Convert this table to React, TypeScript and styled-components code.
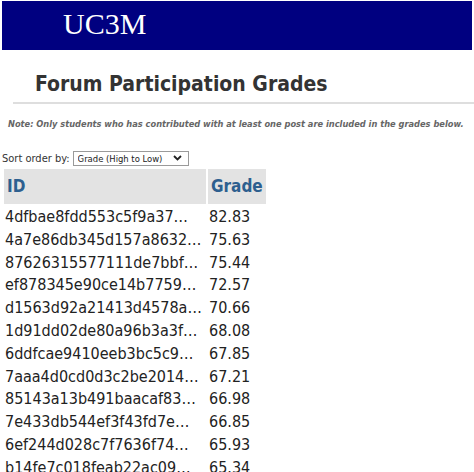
import React from "react";
import styled, { createGlobalStyle } from "styled-components";

const FONT = `"DejaVu Sans Condensed", "DejaVu Sans", sans-serif`;

const GlobalStyle = createGlobalStyle`
  html, body { margin: 0; padding: 0; background: #ffffff; }
  body { font-family: ${FONT}; font-stretch: condensed; color: #222; }
`;

const Page = styled.div`
  padding: 1px 2px 0 2px;
`;

const Banner = styled.header`
  height: 49px;
  background: #000080;
  display: flex;
  align-items: center;
  padding-left: 61px;
  box-sizing: border-box;
`;

const Logo = styled.div`
  font-family: "Liberation Serif", "Times New Roman", serif;
  font-size: 30px;
  color: #ffffff;
  line-height: 1;
  margin-top: -3px;
`;

const TitleBlock = styled.div`
  margin: 22px -2px 0 11px;
  padding: 0 0 6px 22px;
  border-bottom: 2px solid #dedede;
`;

const Title = styled.h1`
  margin: 0;
  font-size: 21px;
  line-height: 24px;
  font-weight: bold;
  color: #333333;
`;

const Note = styled.p`
  margin: 14px 0 0 6px;
  font-size: 9.2px;
  line-height: 12px;
  font-style: italic;
  font-weight: bold;
  color: #666666;
  white-space: nowrap;
`;

const SortRow = styled.div`
  display: flex;
  align-items: center;
  gap: 3px;
  margin-top: 21px;
  font-size: 11px;
  color: #333;
`;

const SelectWrap = styled.span`
  position: relative;
  display: inline-flex;
`;

const Select = styled.select`
  appearance: none;
  -webkit-appearance: none;
  box-sizing: border-box;
  width: 116px;
  height: 15px;
  border: 1px solid #9a9a9a;
  border-radius: 0;
  background: #fff;
  font-family: ${FONT};
  font-stretch: condensed;
  font-size: 9.4px;
  color: #222;
  padding: 0 0 0 4px;
  line-height: 13px;
  margin: 0;
`;

const Chevron = styled.svg`
  position: absolute;
  right: 7px;
  top: 4px;
  pointer-events: none;
`;

const Table = styled.table`
  border-spacing: 2px;
  margin-top: 1px;
  margin-left: 0;
`;

const HeadCell = styled.th<{ $w: number }>`
  width: ${(p) => p.$w}px;
  box-sizing: border-box;
  background: #e3e3e3;
  color: #2d5f8f;
  font-size: 17px;
  font-weight: bold;
  text-align: left;
  padding: 6px 3px;
  line-height: 23px;
`;

const Cell = styled.td<{ $w: number }>`
  max-width: ${(p) => p.$w}px;
  width: ${(p) => p.$w}px;
  box-sizing: border-box;
  padding: 2px 1px 0 1px;
  font-size: 16px;
  line-height: 18.8px;
  color: #222;
  white-space: nowrap;
  overflow: hidden;
  text-overflow: ellipsis;
`;

const rows: [string, string][] = [
  ["4dfbae8fdd553c5f9a37\u2026", "82.83"],
  ["4a7e86db345d157a8632\u2026", "75.63"],
  ["87626315577111de7bbf\u2026", "75.44"],
  ["ef878345e90ce14b7759\u2026", "72.57"],
  ["d1563d92a21413d4578a\u2026", "70.66"],
  ["1d91dd02de80a96b3a3f\u2026", "68.08"],
  ["6ddfcae9410eeb3bc5c9\u2026", "67.85"],
  ["7aaa4d0cd0d3c2be2014\u2026", "67.21"],
  ["85143a13b491baacaf83\u2026", "66.98"],
  ["7e433db544ef3f43fd7e\u2026", "66.85"],
  ["6ef244d028c7f7636f74\u2026", "65.93"],
  ["b14fe7c018feab22ac09\u2026", "65.34"],
  ["a0c3e1d7f2b9845e6a1c\u2026", "64.90"],
];

export default function App() {
  return (
    <>
      <GlobalStyle />
      <Page>
        <Banner>
          <Logo>UC3M</Logo>
        </Banner>
        <TitleBlock>
          <Title>Forum Participation Grades</Title>
        </TitleBlock>
        <Note>
          Note: Only students who has contributed with at least one post are included in the grades below.
        </Note>
        <SortRow>
          <label htmlFor="sort">Sort order by:</label>
          <SelectWrap>
            <Select id="sort" defaultValue="desc">
              <option value="desc">Grade (High to Low)</option>
              <option value="asc">Grade (Low to High)</option>
              <option value="id">ID</option>
            </Select>
            <Chevron width="9" height="6" viewBox="0 0 9 6">
              <path d="M1 1l3.5 3.5L8 1" fill="none" stroke="#222" strokeWidth="1.8" />
            </Chevron>
          </SelectWrap>
        </SortRow>
        <Table>
          <thead>
            <tr>
              <HeadCell $w={202}>ID</HeadCell>
              <HeadCell $w={56}>Grade</HeadCell>
            </tr>
          </thead>
          <tbody>
            {rows.map(([id, g]) => (
              <tr key={id}>
                <Cell $w={202}>{id}</Cell>
                <Cell $w={56}>{g}</Cell>
              </tr>
            ))}
          </tbody>
        </Table>
      </Page>
    </>
  );
}
